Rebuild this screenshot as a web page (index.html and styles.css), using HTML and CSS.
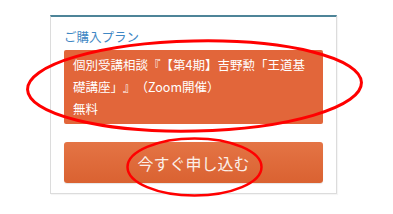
FILE: index.html
```html
<!DOCTYPE html>
<html lang="ja">
<head>
<meta charset="utf-8">
<link rel="stylesheet" href="styles.css">
</head>
<body>
<div class="page">
  <section class="card">
    <h2 class="card-title">ご購入プラン</h2>
    <div class="plan">
      <p class="plan-name">個別受講相談『【第4期】吉野勲「王道基礎講座」』（Zoom開催）</p>
      <p class="plan-price">無料</p>
    </div>
    <button class="apply">今すぐ申し込む</button>
  </section>
  <svg class="marks" width="393" height="214" viewBox="0 0 393 214">
    <ellipse cx="194.5" cy="86" rx="167" ry="45" transform="rotate(-1.2 194.5 86)" fill="none" stroke="#f00" stroke-width="3"/>
    <ellipse cx="194.5" cy="167" rx="67" ry="28.5" fill="none" stroke="#f00" stroke-width="2.5"/>
  </svg>
</div>
</body>
</html>
```

FILE: styles.css
```css
html, body {
  margin: 0;
  padding: 0;
  background: #fff;
}
.page {
  position: relative;
  width: 393px;
  height: 214px;
  padding: 15px 0 0 50px;
  box-sizing: border-box;
  font-family: "Noto Sans CJK JP", "Noto Sans", sans-serif;
  text-spacing-trim: space-all;
}
.card {
  width: 287px;
  box-sizing: border-box;
  border: 1px solid #dcdcdc;
  border-top: 2px solid #4d8498;
  padding: 10px 13px 10px 13px;
  display: flex;
  flex-direction: column;
  box-shadow: 1px 1px 1px rgba(0,0,0,0.04);
}
.card-title {
  margin: 0 0 3px 0;
  font-size: 12.5px;
  line-height: 20px;
  font-weight: normal;
  color: #3f87c4;
}
.plan {
  background: #e2663a;
  border-radius: 2px;
  padding: 4px 9px;
  color: #fff;
  font-size: 12.5px;
  line-height: 22px;
}
.plan p {
  margin: 0;
}
.apply {
  margin-top: 18px;
  height: 41px;
  border: none;
  border-radius: 3px;
  background: linear-gradient(#e47445, #da6231);
  color: #fbefe8;
  font-family: inherit;
  font-size: 16px;
  padding: 0;
  box-shadow: 0 1px 1px rgba(0,0,0,0.1);
}
.marks {
  position: absolute;
  left: 0;
  top: 0;
  pointer-events: none;
}
```
